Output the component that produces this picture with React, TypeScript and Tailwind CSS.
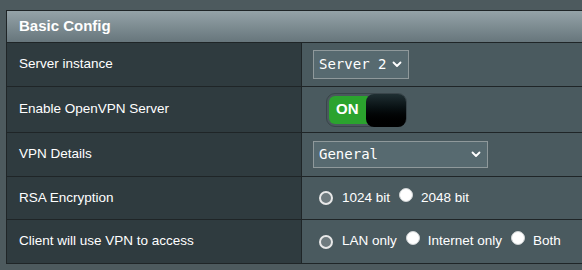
import React from "react";

const sans = { fontFamily: '"Liberation Sans", Arial, sans-serif' };

function Chevron() {
  return (
    <svg width="10" height="7" viewBox="0 0 10 7" className="shrink-0">
      <path d="M1.5 1.5 L5 5 L8.5 1.5" fill="none" stroke="#ffffff" strokeWidth="1.8" strokeLinecap="round" strokeLinejoin="round" />
    </svg>
  );
}

function Radio({ checked }: { checked?: boolean }) {
  return checked ? (
    <span className="inline-block w-[14px] h-[14px] rounded-full bg-[#6f7b7f] border-[2px] border-[#e8e8e8] shrink-0" />
  ) : (
    <span className="inline-block w-[14px] h-[14px] rounded-full bg-white border border-[#cfd3d4] shrink-0" />
  );
}

function Row({ label, h, children }: { label: string; h: string; children: React.ReactNode }) {
  return (
    <div className={`flex border-b border-[#1f2527] ${h}`}>
      <div className="w-[295px] shrink-0 bg-[#2f3b3f] border-r border-[#1f2527] flex items-center pl-[12px] text-white text-[13.5px]">
        {label}
      </div>
      <div className="flex-1 bg-[#4a5a5f] flex items-center pl-[11px]">{children}</div>
    </div>
  );
}

export default function App() {
  return (
    <div className="w-[582px] h-[270px] bg-[#4d5a5e] overflow-hidden pt-[10px] pl-[6px]" style={sans}>
      <div className="w-[600px] border-l border-t border-[#1f2527]">
        <div className="h-[32px] border-b border-[#1f2527] bg-gradient-to-b from-[#95a3a8] to-[#67767c] flex items-center pl-[12px]">
          <span className="text-white font-bold text-[15px]">Basic Config</span>
        </div>
        <Row label="Server instance" h="h-[44px]">
          <div className="w-[96px] h-[29px] border border-[#8f999b] bg-[#576a70] flex items-center pl-[5px] pr-[6px] justify-between">
            <span className="text-white text-[14px]" style={{ fontFamily: '"DejaVu Sans Mono", monospace' }}>Server 2</span>
            <Chevron />
          </div>
        </Row>
        <Row label="Enable OpenVPN Server" h="h-[46px]">
          <div className="relative ml-[13px] w-[81px] h-[34px] rounded-[9px] border border-[#39454a] bg-[#4a585d]">
            <div className="absolute left-[2px] top-[2px] w-[46px] h-[28px] rounded-l-[6px] bg-[#2ba32e] flex items-center pl-[7px]">
              <span className="text-white font-bold text-[15px]">ON</span>
            </div>
            <div className="absolute right-[0px] top-[0px] w-[40px] h-[33px] rounded-[8px] bg-gradient-to-b from-[#1f2f33] to-[#000000]" />
          </div>
        </Row>
        <Row label="VPN Details" h="h-[44px]">
          <div className="w-[175px] h-[27px] border border-[#8f999b] bg-[#576a70] flex items-center pl-[5px] pr-[6px] justify-between">
            <span className="text-white text-[14px]" style={{ fontFamily: '"DejaVu Sans Mono", monospace' }}>General</span>
            <Chevron />
          </div>
        </Row>
        <Row label="RSA Encryption" h="h-[43px]">
          <div className="flex items-center text-white text-[13.5px] pl-[6px]">
            <Radio checked />
            <span className="ml-[9px]">1024 bit</span>
            <span className="ml-[9px]"><Radio /></span>
            <span className="ml-[8px]">2048 bit</span>
          </div>
        </Row>
        <Row label="Client will use VPN to access" h="h-[44px]">
          <div className="flex items-center text-white text-[13.5px] pl-[6px]">
            <Radio checked />
            <span className="ml-[9px]">LAN only</span>
            <span className="ml-[9px]"><Radio /></span>
            <span className="ml-[8px]">Internet only</span>
            <span className="ml-[9px]"><Radio /></span>
            <span className="ml-[8px]">Both</span>
          </div>
        </Row>
      </div>
    </div>
  );
}
